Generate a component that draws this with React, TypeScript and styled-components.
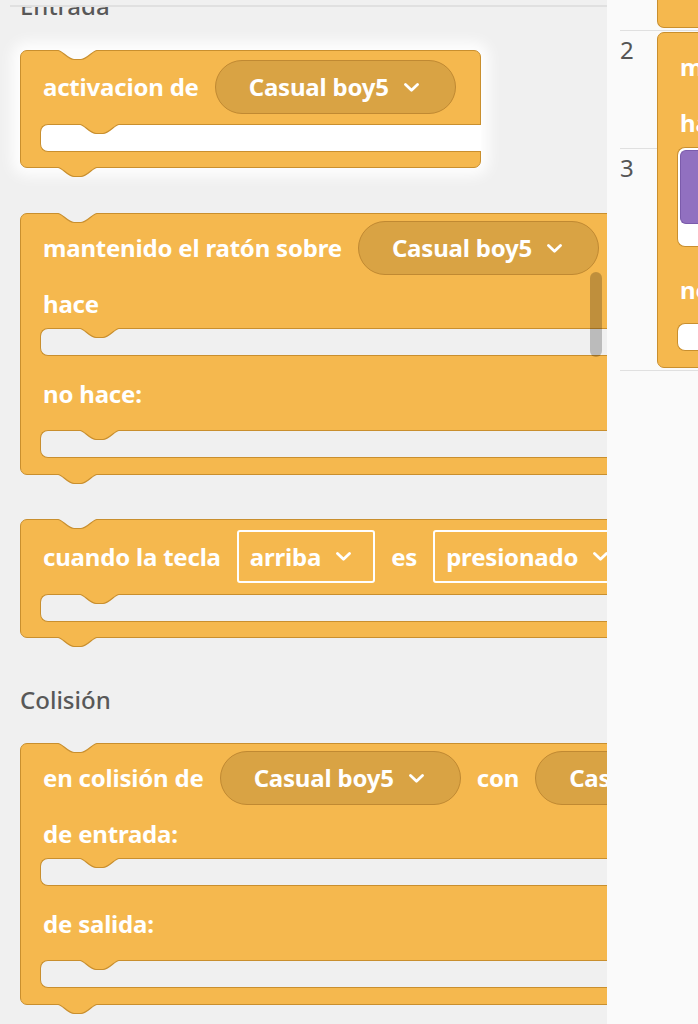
import styled, { createGlobalStyle } from 'styled-components';

const BLOCK = '#f5b84e';
const EDGE = '#c98f2e';
const PILL = '#d9a344';
const PILL_EDGE = '#c08932';
const FLYOUT_BG = '#f0f0f0';
const EDITOR_BG = '#fafafa';
const RULE = '#e0e0e0';

const GlobalStyle = createGlobalStyle`
  html, body {
    margin: 0;
    padding: 0;
  }
  body {
    width: 698px;
    height: 1024px;
    overflow: hidden;
    background: ${FLYOUT_BG};
    font-family: "Noto Sans", "Open Sans", sans-serif;
  }
`;

const Screen = styled.div`
  display: flex;
  width: 698px;
  height: 1024px;
  overflow: hidden;
`;

const Flyout = styled.div`
  position: relative;
  display: flex;
  flex-direction: column;
  width: 607px;
  flex-shrink: 0;
  background: ${FLYOUT_BG};
  padding-top: 5px;
  box-sizing: border-box;
  overflow: hidden;
`;

const Divider = styled.div`
  margin-left: 10px;
  height: 1.5px;
  background: ${RULE};
  flex-shrink: 0;
`;

const Scroll = styled.div`
  flex: 1;
  display: flex;
  flex-direction: column;
  align-items: flex-start;
  padding-left: 20px;
  overflow: hidden;
`;

const Category = styled.div<{ $mt: number }>`
  margin-top: ${({ $mt }) => $mt}px;
  font-size: 24px;
  font-weight: 500;
  line-height: 32px;
  color: #585858;
  white-space: nowrap;
`;

const Thumb = styled.div`
  position: absolute;
  top: 272px;
  right: 5px;
  width: 12px;
  height: 85px;
  border-radius: 6px;
  background: rgba(0, 0, 0, 0.22);
`;

const Block = styled.div<{ $mt?: number; $glow?: boolean }>`
  position: relative;
  display: flex;
  flex-direction: column;
  width: max-content;
  flex-shrink: 0;
  box-sizing: border-box;
  margin-top: ${({ $mt }) => $mt ?? 0}px;
  background: ${BLOCK};
  border: 1px solid ${EDGE};
  border-radius: 7px;
  box-shadow: ${({ $glow }) => ($glow ? '0 0 14px 8px rgba(255, 255, 255, 0.95)' : 'none')};
`;

const Header = styled.div<{ $pt: number; $pb: number }>`
  display: flex;
  align-items: center;
  gap: 16px;
  padding: ${({ $pt, $pb }) => `${$pt}px 24px ${$pb}px 22px`};
`;

const Label = styled.span`
  color: #fff;
  font-size: 24px;
  font-weight: 700;
  letter-spacing: -0.2px;
  line-height: 34px;
  white-space: nowrap;
`;

const LabelRow = styled.div<{ $pt: number; $pb: number }>`
  padding: ${({ $pt, $pb }) => `${$pt}px 24px ${$pb}px 22px`};
`;

const Arm = styled.div<{ $h: number }>`
  height: ${({ $h }) => $h}px;
`;

const Pill = styled.div`
  display: flex;
  align-items: center;
  gap: 15px;
  height: 54px;
  box-sizing: border-box;
  padding: 0 36px 0 33px;
  border-radius: 27px;
  background: ${PILL};
  border: 1px solid ${PILL_EDGE};
`;

const KeyBox = styled.div`
  display: flex;
  align-items: center;
  gap: 15px;
  height: 53px;
  box-sizing: border-box;
  padding: 0 22px 0 11px;
  border: 2px solid #fff;
  border-radius: 3px;
`;

const Slot = styled.div<{ $fill: string; $h?: number }>`
  position: relative;
  height: ${({ $h }) => $h ?? 28}px;
  box-sizing: border-box;
  margin: 0 -1px 0 19px;
  background: ${({ $fill }) => $fill};
  border: 1px solid ${EDGE};
  border-right: none;
  border-radius: 8px 0 0 8px;
`;

const Nested = styled.div`
  height: 74px;
  margin-top: 2px;
  margin-left: 2px;
  box-sizing: border-box;
  background: #9170c0;
  border: 1px solid #7b5bab;
  border-right: none;
  border-radius: 6px 0 0 6px;
`;

const NotchSvg = styled.svg<{ $place: 'top' | 'bottom' | 'slot' }>`
  position: absolute;
  width: 40px;
  height: 12px;
  left: ${({ $place }) => ($place === 'slot' ? 39 : 37)}px;
  ${({ $place }) => ($place === 'bottom' ? 'bottom: -12px;' : 'top: -1px;')}
  overflow: visible;
`;

const CURVE = 'C4 0.5 10 9.5 16 9.5 L23 9.5 C29 9.5 35 0.5 39 0.5';

function Notch({ place, fill }: { place: 'top' | 'bottom' | 'slot'; fill: string }) {
  return (
    <NotchSvg $place={place} viewBox="0 0 40 12">
      <path d={`M0 0 L0 0.5 ${CURVE} L39 0 Z`} fill={fill} />
      <path d={`M0 0.5 ${CURVE}`} fill="none" stroke={EDGE} strokeWidth="1.2" />
    </NotchSvg>
  );
}

function Chevron() {
  return (
    <svg width="15" height="9" viewBox="0 0 15 9">
      <path d="M1.5 1.5 L7.5 7.2 L13.5 1.5" fill="none" stroke="#fff" strokeWidth="2.8" strokeLinecap="round" strokeLinejoin="round" />
    </svg>
  );
}

function Dropdown({ children }: { children: string }) {
  return (
    <Pill>
      <Label>{children}</Label>
      <Chevron />
    </Pill>
  );
}

function KeyDropdown({ children }: { children: string }) {
  return (
    <KeyBox>
      <Label>{children}</Label>
      <Chevron />
    </KeyBox>
  );
}

function StatementSlot({ fill, h, children }: { fill: string; h?: number; children?: React.ReactNode }) {
  return (
    <Slot $fill={fill} $h={h}>
      <Notch place="slot" fill={BLOCK} />
      {children}
    </Slot>
  );
}

const Editor = styled.div`
  flex: 1;
  min-width: 0;
  overflow: hidden;
  background: ${EDITOR_BG};
  padding-left: 13px;
`;

const TailRow = styled.div`
  display: flex;
  height: 30px;
  border-bottom: 1px solid ${RULE};
`;

const TailBlock = styled.div`
  flex: 1;
  height: 28px;
  margin-left: 37px;
  box-sizing: border-box;
  background: ${BLOCK};
  border: 1px solid ${EDGE};
  border-top: none;
  border-right: none;
  border-radius: 0 0 0 7px;
`;

const Lines = styled.div`
  display: grid;
  grid-template-columns: 37px minmax(0, 1fr);
  grid-template-rows: 118px 222px;
`;

const LineRule = styled.div<{ $row: number }>`
  grid-column: 1 / 3;
  grid-row: ${({ $row }) => $row};
  border-bottom: 1px solid ${RULE};
`;

const LineNo = styled.div<{ $row: number }>`
  grid-column: 1;
  grid-row: ${({ $row }) => $row};
  padding-top: 3px;
  font-size: 24px;
  line-height: 32px;
  color: #555;
`;

const PlacedBlock = styled(Block)`
  grid-column: 2;
  grid-row: 1 / 3;
  align-self: start;
  margin-top: 1px;
  z-index: 1;
`;

export default function App() {
  return (
    <>
      <GlobalStyle />
      <Screen>
        <Flyout>
          <Divider />
          <Scroll>
            <Category $mt={-17}>Entrada</Category>

            <Block $mt={28.5} $glow>
              <Notch place="top" fill="#fcfcfc" />
              <Header $pt={9} $pb={10}>
                <Label>activacion de</Label>
                <Dropdown>Casual boy5</Dropdown>
              </Header>
              <StatementSlot fill="#fff" />
              <Arm $h={15} />
              <Notch place="bottom" fill={BLOCK} />
            </Block>

            <Block $mt={45}>
              <Notch place="top" fill={FLYOUT_BG} />
              <Header $pt={7} $pb={0}>
                <Label>mantenido el ratón sobre</Label>
                <Dropdown>Casual boy5</Dropdown>
              </Header>
              <LabelRow $pt={12} $pb={7}>
                <Label>hace</Label>
              </LabelRow>
              <StatementSlot fill={FLYOUT_BG} />
              <LabelRow $pt={21} $pb={19}>
                <Label>no hace:</Label>
              </LabelRow>
              <StatementSlot fill={FLYOUT_BG} />
              <Arm $h={16} />
              <Notch place="bottom" fill={BLOCK} />
            </Block>

            <Block $mt={44}>
              <Notch place="top" fill={FLYOUT_BG} />
              <Header $pt={10} $pb={11}>
                <Label>cuando la tecla</Label>
                <KeyDropdown>arriba</KeyDropdown>
                <Label>es</Label>
                <KeyDropdown>presionado</KeyDropdown>
              </Header>
              <StatementSlot fill={FLYOUT_BG} />
              <Arm $h={15} />
              <Notch place="bottom" fill={BLOCK} />
            </Block>

            <Category $mt={46}>Colisión</Category>

            <Block $mt={27}>
              <Notch place="top" fill={FLYOUT_BG} />
              <Header $pt={7} $pb={0}>
                <Label>en colisión de</Label>
                <Dropdown>Casual boy5</Dropdown>
                <Label>con</Label>
                <Dropdown>Casual boy5</Dropdown>
              </Header>
              <LabelRow $pt={12} $pb={7}>
                <Label>de entrada:</Label>
              </LabelRow>
              <StatementSlot fill={FLYOUT_BG} />
              <LabelRow $pt={21} $pb={19}>
                <Label>de salida:</Label>
              </LabelRow>
              <StatementSlot fill={FLYOUT_BG} />
              <Arm $h={16} />
              <Notch place="bottom" fill={BLOCK} />
            </Block>
          </Scroll>
          <Thumb />
        </Flyout>

        <Editor>
          <TailRow>
            <TailBlock />
          </TailRow>
          <Lines>
            <LineRule $row={1} />
            <LineRule $row={2} />
            <LineNo $row={1}>2</LineNo>
            <LineNo $row={2}>3</LineNo>
            <PlacedBlock>
              <Header $pt={7} $pb={0}>
                <Label>mantenido el ratón sobre</Label>
                <Dropdown>Casual boy5</Dropdown>
              </Header>
              <LabelRow $pt={12} $pb={7}>
                <Label>hace</Label>
              </LabelRow>
              <StatementSlot fill="#fff" h={100}>
                <Nested />
              </StatementSlot>
              <LabelRow $pt={26} $pb={16}>
                <Label>no hace:</Label>
              </LabelRow>
              <StatementSlot fill="#fff" />
              <Arm $h={16} />
            </PlacedBlock>
          </Lines>
        </Editor>
      </Screen>
    </>
  );
}
